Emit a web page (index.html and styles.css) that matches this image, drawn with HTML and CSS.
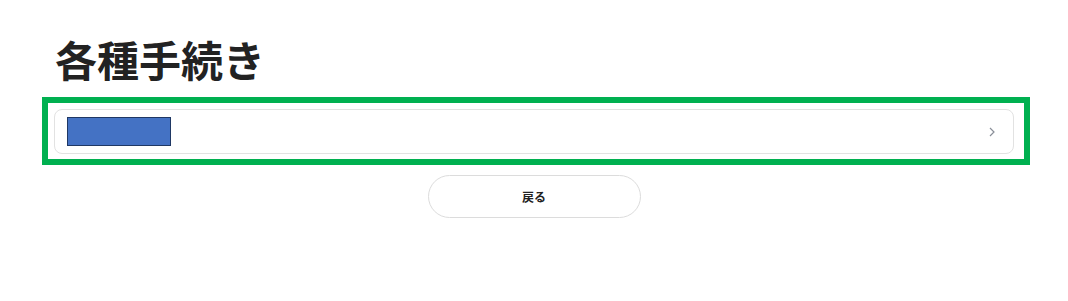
FILE: index.html
```html
<!DOCTYPE html>
<html lang="ja">
<head>
<meta charset="utf-8">
<title>各種手続き</title>
<link rel="stylesheet" href="styles.css">
</head>
<body>
<main class="page">
  <h1 class="title">各種手続き</h1>
  <div class="frame">
    <a class="card" href="#">
      <span class="redacted"></span>
      <svg class="chev" width="6" height="10" viewBox="0 0 6 10"><path d="M1 1 L5 5 L1 9" fill="none" stroke="#8a8f99" stroke-width="1.2"/></svg>
    </a>
  </div>
  <div class="actions">
    <button class="back" type="button">戻る</button>
  </div>
</main>
</body>
</html>
```
FILE: styles.css
```css
html, body {
  margin: 0;
  padding: 0;
  background: #fff;
}
body {
  font-family: "Noto Sans CJK JP", "Noto Sans", sans-serif;
  color: #222;
}
.page {
  padding-top: 35px;
}
.title {
  margin: 0 0 14px 55px;
  font-size: 42px;
  line-height: 48px;
  font-weight: 700;
  color: #222;
}
.frame {
  margin-left: 42px;
  width: 988px;
  box-sizing: border-box;
  border: 6px solid #00b050;
  padding: 6px 10px 5px 6px;
}
.card {
  display: flex;
  align-items: center;
  justify-content: space-between;
  height: 45px;
  box-sizing: border-box;
  border: 1px solid #e2e2e2;
  border-radius: 8px;
  padding: 0 18px 0 12px;
  text-decoration: none;
}
.redacted {
  display: block;
  width: 104px;
  height: 29px;
  box-sizing: border-box;
  background: #4472c4;
  border: 1px solid #1f3864;
}
.chev {
  display: block;
}
.actions {
  display: flex;
  justify-content: center;
  margin-top: 10px;
}
.back {
  width: 213px;
  height: 43px;
  border: 1px solid #dcdcdc;
  border-radius: 22px;
  background: #fff;
  font-family: "Noto Sans CJK JP", "Noto Sans", sans-serif;
  font-size: 12px;
  font-weight: 700;
  color: #222;
  cursor: pointer;
}
```
